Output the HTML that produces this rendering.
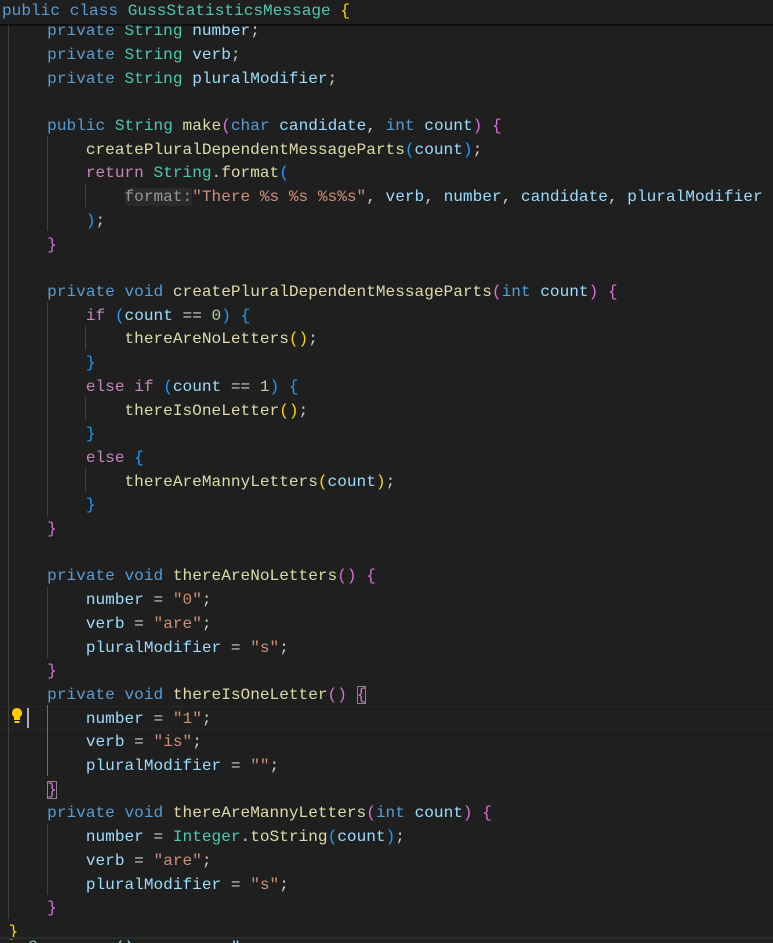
<!DOCTYPE html>
<html><head><meta charset="utf-8"><style>
html,body{margin:0;padding:0;background:#1f1f1f;width:773px;height:943px;overflow:hidden;position:relative}
#w{position:absolute;left:0;top:3px;width:773px;height:943px}
.l{position:absolute;left:8.5px;height:23.71px;line-height:23.71px;font-family:"Liberation Mono",monospace;font-size:16.13px;white-space:pre;color:#cccccc}
.k{color:#569cd6}.t{color:#4ec9b0}.v{color:#9cdcfe}.f{color:#dcdcaa}.s{color:#ce9178}.c{color:#c586c0}.n{color:#b5cea8}
.b1{color:#ffd700}.b2{color:#da70d6}.b3{color:#179fff}
.g{position:absolute;width:1px;background:#404040}
.hint{color:#969696;background:#2a2a2a;border-radius:3px}
.box{outline:1px solid #888;outline-offset:-1px}
</style></head><body>
<div id="w">
<div style="position:absolute;left:0;top:703px;width:773px;height:22px;border-top:1px solid #282828;border-bottom:1px solid #282828"></div>
<div class="g" style="left:8px;top:21px;height:895px"></div>
<div class="g" style="left:47px;top:133px;height:95px"></div>
<div class="g" style="left:47px;top:299px;height:214px"></div>
<div class="g" style="left:85px;top:180px;height:24px"></div>
<div class="g" style="left:85px;top:323px;height:24px"></div>
<div class="g" style="left:85px;top:394px;height:24px"></div>
<div class="g" style="left:85px;top:465px;height:24px"></div>
<div class="g" style="left:47px;top:584px;height:71px"></div>
<div class="g" style="left:47px;top:702px;height:71px;background:#707070"></div>
<div class="g" style="left:47px;top:821px;height:71px"></div>

<div class="l" style="top:17.1px"><span class="k">    private</span> <span class="t">String</span> <span class="v">number</span>;</div>
<div class="l" style="top:40.8px">    <span class="k">private</span> <span class="t">String</span> <span class="v">verb</span>;</div>
<div class="l" style="top:64.5px">    <span class="k">private</span> <span class="t">String</span> <span class="v">pluralModifier</span>;</div>
<div class="l" style="top:112px">    <span class="k">public</span> <span class="t">String</span> <span class="f">make</span><span class="b2">(</span><span class="k">char</span> <span class="v">candidate</span>, <span class="k">int</span> <span class="v">count</span><span class="b2">)</span> <span class="b2">{</span></div>
<div class="l" style="top:135.7px">        <span class="f">createPluralDependentMessageParts</span><span class="b3">(</span><span class="v">count</span><span class="b3">)</span>;</div>
<div class="l" style="top:159.4px">        <span class="c">return</span> <span class="t">String</span>.<span class="f">format</span><span class="b3">(</span></div>
<div class="l" style="top:183.1px">            <span class="hint">format:</span><span class="s">"There %s %s %s%s"</span>, <span class="v">verb</span>, <span class="v">number</span>, <span class="v">candidate</span>, <span class="v">pluralModifier</span></div>
<div class="l" style="top:206.8px">        <span class="b3">)</span>;</div>
<div class="l" style="top:230.5px">    <span class="b2">}</span></div>
<div class="l" style="top:278px">    <span class="k">private</span> <span class="k">void</span> <span class="f">createPluralDependentMessageParts</span><span class="b2">(</span><span class="k">int</span> <span class="v">count</span><span class="b2">)</span> <span class="b2">{</span></div>
<div class="l" style="top:301.7px">        <span class="c">if</span> <span class="b3">(</span><span class="v">count</span> == <span class="n">0</span><span class="b3">)</span> <span class="b3">{</span></div>
<div class="l" style="top:325.4px">            <span class="f">thereAreNoLetters</span><span class="b1">()</span>;</div>
<div class="l" style="top:349.1px">        <span class="b3">}</span></div>
<div class="l" style="top:372.8px">        <span class="c">else</span> <span class="c">if</span> <span class="b3">(</span><span class="v">count</span> == <span class="n">1</span><span class="b3">)</span> <span class="b3">{</span></div>
<div class="l" style="top:396.5px">            <span class="f">thereIsOneLetter</span><span class="b1">()</span>;</div>
<div class="l" style="top:420.2px">        <span class="b3">}</span></div>
<div class="l" style="top:443.9px">        <span class="c">else</span> <span class="b3">{</span></div>
<div class="l" style="top:467.6px">            <span class="f">thereAreMannyLetters</span><span class="b1">(</span><span class="v">count</span><span class="b1">)</span>;</div>
<div class="l" style="top:491.3px">        <span class="b3">}</span></div>
<div class="l" style="top:515px">    <span class="b2">}</span></div>
<div class="l" style="top:562.4px">    <span class="k">private</span> <span class="k">void</span> <span class="f">thereAreNoLetters</span><span class="b2">()</span> <span class="b2">{</span></div>
<div class="l" style="top:586.1px">        <span class="v">number</span> = <span class="s">"0"</span>;</div>
<div class="l" style="top:609.8px">        <span class="v">verb</span> = <span class="s">"are"</span>;</div>
<div class="l" style="top:633.5px">        <span class="v">pluralModifier</span> = <span class="s">"s"</span>;</div>
<div class="l" style="top:657.2px">    <span class="b2">}</span></div>
<div class="l" style="top:680.9px">    <span class="k">private</span> <span class="k">void</span> <span class="f">thereIsOneLetter</span><span class="b2">()</span> <span class="b2 box">{</span></div>
<div class="l" style="top:704.6px">        <span class="v">number</span> = <span class="s">"1"</span>;</div>
<div class="l" style="top:728.3px">        <span class="v">verb</span> = <span class="s">"is"</span>;</div>
<div class="l" style="top:752px">        <span class="v">pluralModifier</span> = <span class="s">""</span>;</div>
<div class="l" style="top:775.7px">    <span class="b2 box">}</span></div>
<div class="l" style="top:799.4px">    <span class="k">private</span> <span class="k">void</span> <span class="f">thereAreMannyLetters</span><span class="b2">(</span><span class="k">int</span> <span class="v">count</span><span class="b2">)</span> <span class="b2">{</span></div>
<div class="l" style="top:823.1px">        <span class="v">number</span> = <span class="t">Integer</span>.<span class="f">toString</span><span class="b3">(</span><span class="v">count</span><span class="b3">)</span>;</div>
<div class="l" style="top:846.8px">        <span class="v">verb</span> = <span class="s">"are"</span>;</div>
<div class="l" style="top:870.5px">        <span class="v">pluralModifier</span> = <span class="s">"s"</span>;</div>
<div class="l" style="top:894.2px">    <span class="b2">}</span></div>
<div class="l" style="top:917.9px"><span class="b1">}</span></div>

<svg style="position:absolute;left:11px;top:704px" width="12" height="18" viewBox="0 0 12 18"><path d="M6 1a5 5 0 0 0-3 9v3h6v-3a5 5 0 0 0-3-9z" fill="#ffcc00"/><rect x="3.5" y="14" width="5" height="2" fill="#ffcc00"/></svg>
<div style="position:absolute;left:27px;top:705px;width:2px;height:20px;background:#aeafad"></div>
</div>
<div style="position:absolute;left:0;top:937px;width:773px;height:2px;background:#2b2b2b"></div>
<div class="l" style="top:937px;color:#9cdcfe">  @   .    ()          "</div>

<div style="position:absolute;left:0;top:0;width:773px;height:24px;background:#1f1f1f;box-shadow:0 1px 2px #000"></div>
<div class="l" style="top:0;left:2px"><span class="k">public</span> <span class="k">class</span> <span class="t">GussStatisticsMessage</span> <span class="b1">{</span></div>
</body></html>
